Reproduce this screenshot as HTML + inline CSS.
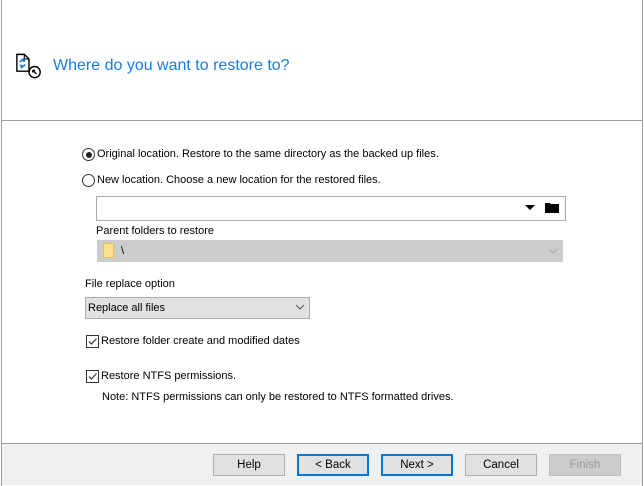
<!DOCTYPE html>
<html><head><style>
body{margin:0;width:644px;height:486px;position:relative;overflow:hidden;background:#fff;font-family:"Liberation Sans",sans-serif;font-size:11px;color:#000}
.a{position:absolute}
.t{position:absolute;line-height:13px}
.btn{position:absolute;top:454px;width:70px;height:20px;border:1px solid #adadad;background:#e1e1e1;text-align:center;line-height:21px;font-size:11.5px}
.btn.f{border:2px solid #0078d7;width:68px;height:18px;line-height:19px}
.radio{position:absolute;width:11px;height:11px;border:1px solid #333;border-radius:50%;background:#fff}
.cb{position:absolute;width:11px;height:11px;border:1px solid #333;background:#fff}
</style></head><body>
<div class="a" style="left:1px;top:0;width:1px;height:486px;background:#a0a0a0"></div>
<div class="a" style="right:1px;top:0;width:1px;height:486px;background:#a0a0a0"></div>
<div class="a" style="left:1px;top:484px;width:642px;height:1px;background:#a0a0a0"></div>
<div class="a" style="left:2px;top:120px;width:640px;height:1px;background:#a0a0a0"></div>
<div class="a" style="left:2px;top:443px;width:640px;height:41px;background:#f0f0f0;border-top:1px solid #a0a0a0"></div>
<svg class="a" style="left:15px;top:53px" width="28" height="27" viewBox="0 0 30 28">
<path d="M2 1H10L15 6V19H2Z" fill="#fff" stroke="#000" stroke-width="1.5"/>
<path d="M10 1V6H15" fill="none" stroke="#000" stroke-width="1.2"/>
<path d="M5 9L9 6V8H11" fill="none" stroke="#1c7fd6" stroke-width="1.8"/>
<path d="M11 12L7 15V13H5" fill="none" stroke="#1c7fd6" stroke-width="1.8"/>
<circle cx="21" cy="20" r="6" fill="#fff" stroke="#000" stroke-width="1.5"/>
<path d="M19 18L23 22M19 18V20.5M19 18H21.5" fill="none" stroke="#000" stroke-width="1.4"/>
</svg>
<div class="a" style="left:53px;top:57px;font-size:16px;color:#1a7ee0">Where do you want to restore to?</div>
<div class="radio" style="left:82px;top:148px"><div style="position:absolute;left:2.5px;top:2.5px;width:6px;height:6px;border-radius:50%;background:#222"></div></div>
<div class="t" style="left:97px;top:148px">Original location. Restore to the same directory as the backed up files.</div>
<div class="radio" style="left:82px;top:174px"></div>
<div class="t" style="left:97px;top:174px">New location. Choose a new location for the restored files.</div>
<div class="a" style="left:96px;top:196px;width:468px;height:23px;border:1px solid #aaa;background:#fff"></div>
<div class="a" style="left:525px;top:205px;width:0;height:0;border-left:5px solid transparent;border-right:5px solid transparent;border-top:5px solid #000"></div>
<svg class="a" style="left:545px;top:202px" width="15" height="12"><path d="M0 1H5L6 2H14V11H0Z" fill="#000"/></svg>
<div class="t" style="left:96px;top:225px">Parent folders to restore</div>
<div class="a" style="left:97px;top:240px;width:466px;height:22px;background:#cccccc"></div>
<div class="a" style="left:103px;top:243px;width:11px;height:15px;background:#fbe08d;border:1px solid #e6c060;box-sizing:border-box"></div>
<div class="t" style="left:121px;top:245px">\</div>
<svg class="a" style="left:548px;top:248px" width="10" height="6"><path d="M1 1L5 5L9 1" fill="none" stroke="#aaa"/></svg>
<div class="t" style="left:85px;top:278px">File replace option</div>
<div class="a" style="left:85px;top:297px;width:223px;height:20px;background:#e1e1e1;border:1px solid #adadad"></div>
<div class="t" style="left:88px;top:302px">Replace all files</div>
<svg class="a" style="left:295px;top:304px" width="10" height="6"><path d="M1 1L5 5L9 1" fill="none" stroke="#555"/></svg>
<div class="cb" style="left:86px;top:335px"><svg width="11" height="11" style="position:absolute"><path d="M2 5.5L4.5 8L9.5 2.5" fill="none" stroke="#333" stroke-width="1.2"/></svg></div>
<div class="t" style="left:101px;top:335px">Restore folder create and modified dates</div>
<div class="cb" style="left:86px;top:370px"><svg width="11" height="11" style="position:absolute"><path d="M2 5.5L4.5 8L9.5 2.5" fill="none" stroke="#333" stroke-width="1.2"/></svg></div>
<div class="t" style="left:101px;top:370px">Restore NTFS permissions.</div>
<div class="t" style="left:102px;top:391px">Note: NTFS permissions can only be restored to NTFS formatted drives.</div>
<div class="btn" style="left:213px">Help</div>
<div class="btn f" style="left:297px">&lt; Back</div>
<div class="btn f" style="left:381px">Next &gt;</div>
<div class="btn" style="left:465px">Cancel</div>
<div class="btn" style="left:549px;color:#9a9a9a;background:#cccccc;border-color:#bfbfbf">Finish</div>
</body></html>
